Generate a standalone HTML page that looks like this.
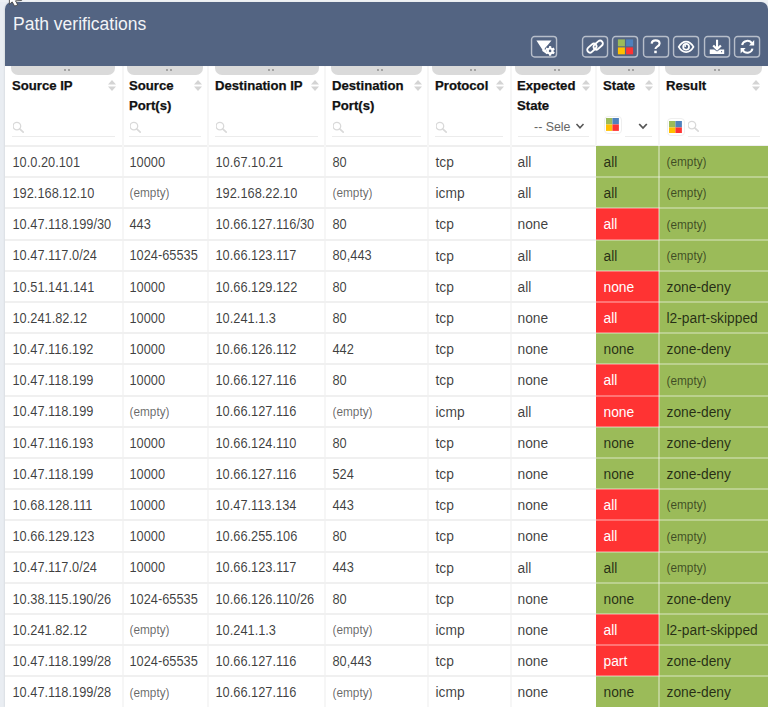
<!DOCTYPE html><html><head><meta charset="utf-8"><style>
html,body{margin:0;padding:0}
body{width:768px;height:707px;overflow:hidden;position:relative;background:#e9edf2;font-family:"Liberation Sans",sans-serif;}
.a{position:absolute}
#topstrip{left:0;top:0;width:768px;height:2px;background:#eef1f4}
#panel{left:5px;top:2px;width:763px;height:64px;background:#536482;border-radius:7px 7px 0 0;box-shadow:-1px 0 1.5px rgba(0,0,0,0.07)}
#title{left:13px;top:13.5px;font-size:17.5px;color:#f2f4f7;white-space:nowrap;line-height:20px}
.btn{top:36px;width:24px;height:20px;border:1.5px solid rgba(255,255,255,0.55);border-radius:4px}
#tbl{left:5px;top:66px;width:763px;height:641px;background:#fff;box-shadow:-1px 0 1.5px rgba(0,0,0,0.06)}
.handle{top:66px;height:9.3px;background:#dadada;border-radius:0 0 7px 7px}
.dots{top:69.2px;width:6px;height:2px}
.ht{font-weight:bold;font-size:13.15px;color:#111;-webkit-text-stroke:0.25px #111;white-space:nowrap;line-height:20px}
.sort{width:8px;height:11px}
.uline{top:136px;height:1px;background:#ececec}
.vline{top:66px;width:2px;height:641px;background:#f6f6f6}
.hline{left:5px;width:763px;height:2px;background:#f0f0f0}
.cell{font-size:12.8px;color:rgba(0,0,0,0.76);white-space:nowrap;line-height:16px;transform:scaleY(1.1);transform-origin:0 12.4px}
.emp{font-size:11.8px;color:rgba(0,0,0,0.6);margin-top:-0.7px}
.g{background:#9bbb59}
.r{background:#ff3333}
</style></head><body>
<div class="a" id="topstrip"></div>
<div class="a" id="tbl"></div>
<div class="a" style="left:5px;top:144.9px;width:763px;height:2px;background:#efefef"></div>
<div class="a g" style="left:596px;top:146.00px;width:63px;height:31.20px"></div>
<div class="a g" style="left:659px;top:146.00px;width:109px;height:31.20px"></div>
<div class="a g" style="left:596px;top:177.20px;width:63px;height:31.20px"></div>
<div class="a g" style="left:659px;top:177.20px;width:109px;height:31.20px"></div>
<div class="a r" style="left:596px;top:208.40px;width:63px;height:31.20px"></div>
<div class="a g" style="left:659px;top:208.40px;width:109px;height:31.20px"></div>
<div class="a g" style="left:596px;top:239.60px;width:63px;height:31.20px"></div>
<div class="a g" style="left:659px;top:239.60px;width:109px;height:31.20px"></div>
<div class="a r" style="left:596px;top:270.80px;width:63px;height:31.20px"></div>
<div class="a g" style="left:659px;top:270.80px;width:109px;height:31.20px"></div>
<div class="a r" style="left:596px;top:302.00px;width:63px;height:31.20px"></div>
<div class="a g" style="left:659px;top:302.00px;width:109px;height:31.20px"></div>
<div class="a g" style="left:596px;top:333.20px;width:63px;height:31.20px"></div>
<div class="a g" style="left:659px;top:333.20px;width:109px;height:31.20px"></div>
<div class="a r" style="left:596px;top:364.40px;width:63px;height:31.20px"></div>
<div class="a g" style="left:659px;top:364.40px;width:109px;height:31.20px"></div>
<div class="a r" style="left:596px;top:395.60px;width:63px;height:31.20px"></div>
<div class="a g" style="left:659px;top:395.60px;width:109px;height:31.20px"></div>
<div class="a g" style="left:596px;top:426.80px;width:63px;height:31.20px"></div>
<div class="a g" style="left:659px;top:426.80px;width:109px;height:31.20px"></div>
<div class="a g" style="left:596px;top:458.00px;width:63px;height:31.20px"></div>
<div class="a g" style="left:659px;top:458.00px;width:109px;height:31.20px"></div>
<div class="a r" style="left:596px;top:489.20px;width:63px;height:31.20px"></div>
<div class="a g" style="left:659px;top:489.20px;width:109px;height:31.20px"></div>
<div class="a r" style="left:596px;top:520.40px;width:63px;height:31.20px"></div>
<div class="a g" style="left:659px;top:520.40px;width:109px;height:31.20px"></div>
<div class="a g" style="left:596px;top:551.60px;width:63px;height:31.20px"></div>
<div class="a g" style="left:659px;top:551.60px;width:109px;height:31.20px"></div>
<div class="a g" style="left:596px;top:582.80px;width:63px;height:31.20px"></div>
<div class="a g" style="left:659px;top:582.80px;width:109px;height:31.20px"></div>
<div class="a r" style="left:596px;top:614.00px;width:63px;height:31.20px"></div>
<div class="a g" style="left:659px;top:614.00px;width:109px;height:31.20px"></div>
<div class="a r" style="left:596px;top:645.20px;width:63px;height:31.20px"></div>
<div class="a g" style="left:659px;top:645.20px;width:109px;height:31.20px"></div>
<div class="a g" style="left:596px;top:676.40px;width:63px;height:31.20px"></div>
<div class="a g" style="left:659px;top:676.40px;width:109px;height:31.20px"></div>
<div class="a vline" style="left:121.80px"></div>
<div class="a vline" style="left:207.10px"></div>
<div class="a vline" style="left:324.20px"></div>
<div class="a vline" style="left:427.00px"></div>
<div class="a vline" style="left:509.50px"></div>
<div class="a vline" style="left:594.70px;height:80px"></div>
<div class="a vline" style="left:657.90px;height:80px"></div>
<div class="a" style="left:657.9px;top:146px;width:2px;height:561px;background:rgba(255,255,255,0.35)"></div>
<div class="a hline" style="top:176.20px;width:591px"></div>
<div class="a hline" style="top:176.20px;left:596px;width:172px;background:rgba(255,255,255,0.32)"></div>
<div class="a hline" style="top:207.40px;width:591px"></div>
<div class="a hline" style="top:207.40px;left:596px;width:172px;background:rgba(255,255,255,0.32)"></div>
<div class="a hline" style="top:238.60px;width:591px"></div>
<div class="a hline" style="top:238.60px;left:596px;width:172px;background:rgba(255,255,255,0.32)"></div>
<div class="a hline" style="top:269.80px;width:591px"></div>
<div class="a hline" style="top:269.80px;left:596px;width:172px;background:rgba(255,255,255,0.32)"></div>
<div class="a hline" style="top:301.00px;width:591px"></div>
<div class="a hline" style="top:301.00px;left:596px;width:172px;background:rgba(255,255,255,0.32)"></div>
<div class="a hline" style="top:332.20px;width:591px"></div>
<div class="a hline" style="top:332.20px;left:596px;width:172px;background:rgba(255,255,255,0.32)"></div>
<div class="a hline" style="top:363.40px;width:591px"></div>
<div class="a hline" style="top:363.40px;left:596px;width:172px;background:rgba(255,255,255,0.32)"></div>
<div class="a hline" style="top:394.60px;width:591px"></div>
<div class="a hline" style="top:394.60px;left:596px;width:172px;background:rgba(255,255,255,0.32)"></div>
<div class="a hline" style="top:425.80px;width:591px"></div>
<div class="a hline" style="top:425.80px;left:596px;width:172px;background:rgba(255,255,255,0.32)"></div>
<div class="a hline" style="top:457.00px;width:591px"></div>
<div class="a hline" style="top:457.00px;left:596px;width:172px;background:rgba(255,255,255,0.32)"></div>
<div class="a hline" style="top:488.20px;width:591px"></div>
<div class="a hline" style="top:488.20px;left:596px;width:172px;background:rgba(255,255,255,0.32)"></div>
<div class="a hline" style="top:519.40px;width:591px"></div>
<div class="a hline" style="top:519.40px;left:596px;width:172px;background:rgba(255,255,255,0.32)"></div>
<div class="a hline" style="top:550.60px;width:591px"></div>
<div class="a hline" style="top:550.60px;left:596px;width:172px;background:rgba(255,255,255,0.32)"></div>
<div class="a hline" style="top:581.80px;width:591px"></div>
<div class="a hline" style="top:581.80px;left:596px;width:172px;background:rgba(255,255,255,0.32)"></div>
<div class="a hline" style="top:613.00px;width:591px"></div>
<div class="a hline" style="top:613.00px;left:596px;width:172px;background:rgba(255,255,255,0.32)"></div>
<div class="a hline" style="top:644.20px;width:591px"></div>
<div class="a hline" style="top:644.20px;left:596px;width:172px;background:rgba(255,255,255,0.32)"></div>
<div class="a hline" style="top:675.40px;width:591px"></div>
<div class="a hline" style="top:675.40px;left:596px;width:172px;background:rgba(255,255,255,0.32)"></div>
<div class="a hline" style="top:706.60px;width:591px"></div>
<div class="a hline" style="top:706.60px;left:596px;width:172px;background:rgba(255,255,255,0.32)"></div>
<div class="a cell" style="left:12.5px;top:154.80px;">10.0.20.101</div>
<div class="a cell" style="left:129.5px;top:154.80px;">10000</div>
<div class="a cell" style="left:215.5px;top:154.80px;">10.67.10.21</div>
<div class="a cell" style="left:332.5px;top:154.80px;">80</div>
<div class="a cell" style="left:435.5px;top:154.80px;font-size:13.8px;margin-top:0.2px;transform:none;">tcp</div>
<div class="a cell" style="left:517.5px;top:154.80px;font-size:13.8px;margin-top:0.2px;transform:none;">all</div>
<div class="a cell" style="left:603.5px;top:154.80px;font-size:13.8px;margin-top:0.2px;transform:none;">all</div>
<div class="a cell emp" style="left:666.5px;top:154.80px;">(empty)</div>
<div class="a cell" style="left:12.5px;top:186.00px;">192.168.12.10</div>
<div class="a cell emp" style="left:129.5px;top:186.00px;">(empty)</div>
<div class="a cell" style="left:215.5px;top:186.00px;">192.168.22.10</div>
<div class="a cell emp" style="left:332.5px;top:186.00px;">(empty)</div>
<div class="a cell" style="left:435.5px;top:186.00px;font-size:13.8px;margin-top:0.2px;transform:none;">icmp</div>
<div class="a cell" style="left:517.5px;top:186.00px;font-size:13.8px;margin-top:0.2px;transform:none;">all</div>
<div class="a cell" style="left:603.5px;top:186.00px;font-size:13.8px;margin-top:0.2px;transform:none;">all</div>
<div class="a cell emp" style="left:666.5px;top:186.00px;">(empty)</div>
<div class="a cell" style="left:12.5px;top:217.20px;">10.47.118.199/30</div>
<div class="a cell" style="left:129.5px;top:217.20px;">443</div>
<div class="a cell" style="left:215.5px;top:217.20px;">10.66.127.116/30</div>
<div class="a cell" style="left:332.5px;top:217.20px;">80</div>
<div class="a cell" style="left:435.5px;top:217.20px;font-size:13.8px;margin-top:0.2px;transform:none;">tcp</div>
<div class="a cell" style="left:517.5px;top:217.20px;font-size:13.8px;margin-top:0.2px;transform:none;">none</div>
<div class="a cell" style="left:603.5px;top:217.20px;color:#fff;font-size:13.8px;margin-top:0.2px;transform:none;">all</div>
<div class="a cell emp" style="left:666.5px;top:217.20px;">(empty)</div>
<div class="a cell" style="left:12.5px;top:248.40px;">10.47.117.0/24</div>
<div class="a cell" style="left:129.5px;top:248.40px;">1024-65535</div>
<div class="a cell" style="left:215.5px;top:248.40px;">10.66.123.117</div>
<div class="a cell" style="left:332.5px;top:248.40px;">80,443</div>
<div class="a cell" style="left:435.5px;top:248.40px;font-size:13.8px;margin-top:0.2px;transform:none;">tcp</div>
<div class="a cell" style="left:517.5px;top:248.40px;font-size:13.8px;margin-top:0.2px;transform:none;">all</div>
<div class="a cell" style="left:603.5px;top:248.40px;font-size:13.8px;margin-top:0.2px;transform:none;">all</div>
<div class="a cell emp" style="left:666.5px;top:248.40px;">(empty)</div>
<div class="a cell" style="left:12.5px;top:279.60px;">10.51.141.141</div>
<div class="a cell" style="left:129.5px;top:279.60px;">10000</div>
<div class="a cell" style="left:215.5px;top:279.60px;">10.66.129.122</div>
<div class="a cell" style="left:332.5px;top:279.60px;">80</div>
<div class="a cell" style="left:435.5px;top:279.60px;font-size:13.8px;margin-top:0.2px;transform:none;">tcp</div>
<div class="a cell" style="left:517.5px;top:279.60px;font-size:13.8px;margin-top:0.2px;transform:none;">all</div>
<div class="a cell" style="left:603.5px;top:279.60px;color:#fff;font-size:13.8px;margin-top:0.2px;transform:none;">none</div>
<div class="a cell" style="left:666.5px;top:279.60px;font-size:13.8px;margin-top:0.2px;transform:none;">zone-deny</div>
<div class="a cell" style="left:12.5px;top:310.80px;">10.241.82.12</div>
<div class="a cell" style="left:129.5px;top:310.80px;">10000</div>
<div class="a cell" style="left:215.5px;top:310.80px;">10.241.1.3</div>
<div class="a cell" style="left:332.5px;top:310.80px;">80</div>
<div class="a cell" style="left:435.5px;top:310.80px;font-size:13.8px;margin-top:0.2px;transform:none;">tcp</div>
<div class="a cell" style="left:517.5px;top:310.80px;font-size:13.8px;margin-top:0.2px;transform:none;">none</div>
<div class="a cell" style="left:603.5px;top:310.80px;color:#fff;font-size:13.8px;margin-top:0.2px;transform:none;">all</div>
<div class="a cell" style="left:666.5px;top:310.80px;font-size:13.8px;margin-top:0.2px;transform:none;">l2-part-skipped</div>
<div class="a cell" style="left:12.5px;top:342.00px;">10.47.116.192</div>
<div class="a cell" style="left:129.5px;top:342.00px;">10000</div>
<div class="a cell" style="left:215.5px;top:342.00px;">10.66.126.112</div>
<div class="a cell" style="left:332.5px;top:342.00px;">442</div>
<div class="a cell" style="left:435.5px;top:342.00px;font-size:13.8px;margin-top:0.2px;transform:none;">tcp</div>
<div class="a cell" style="left:517.5px;top:342.00px;font-size:13.8px;margin-top:0.2px;transform:none;">none</div>
<div class="a cell" style="left:603.5px;top:342.00px;font-size:13.8px;margin-top:0.2px;transform:none;">none</div>
<div class="a cell" style="left:666.5px;top:342.00px;font-size:13.8px;margin-top:0.2px;transform:none;">zone-deny</div>
<div class="a cell" style="left:12.5px;top:373.20px;">10.47.118.199</div>
<div class="a cell" style="left:129.5px;top:373.20px;">10000</div>
<div class="a cell" style="left:215.5px;top:373.20px;">10.66.127.116</div>
<div class="a cell" style="left:332.5px;top:373.20px;">80</div>
<div class="a cell" style="left:435.5px;top:373.20px;font-size:13.8px;margin-top:0.2px;transform:none;">tcp</div>
<div class="a cell" style="left:517.5px;top:373.20px;font-size:13.8px;margin-top:0.2px;transform:none;">none</div>
<div class="a cell" style="left:603.5px;top:373.20px;color:#fff;font-size:13.8px;margin-top:0.2px;transform:none;">all</div>
<div class="a cell emp" style="left:666.5px;top:373.20px;">(empty)</div>
<div class="a cell" style="left:12.5px;top:404.40px;">10.47.118.199</div>
<div class="a cell emp" style="left:129.5px;top:404.40px;">(empty)</div>
<div class="a cell" style="left:215.5px;top:404.40px;">10.66.127.116</div>
<div class="a cell emp" style="left:332.5px;top:404.40px;">(empty)</div>
<div class="a cell" style="left:435.5px;top:404.40px;font-size:13.8px;margin-top:0.2px;transform:none;">icmp</div>
<div class="a cell" style="left:517.5px;top:404.40px;font-size:13.8px;margin-top:0.2px;transform:none;">all</div>
<div class="a cell" style="left:603.5px;top:404.40px;color:#fff;font-size:13.8px;margin-top:0.2px;transform:none;">none</div>
<div class="a cell" style="left:666.5px;top:404.40px;font-size:13.8px;margin-top:0.2px;transform:none;">zone-deny</div>
<div class="a cell" style="left:12.5px;top:435.60px;">10.47.116.193</div>
<div class="a cell" style="left:129.5px;top:435.60px;">10000</div>
<div class="a cell" style="left:215.5px;top:435.60px;">10.66.124.110</div>
<div class="a cell" style="left:332.5px;top:435.60px;">80</div>
<div class="a cell" style="left:435.5px;top:435.60px;font-size:13.8px;margin-top:0.2px;transform:none;">tcp</div>
<div class="a cell" style="left:517.5px;top:435.60px;font-size:13.8px;margin-top:0.2px;transform:none;">none</div>
<div class="a cell" style="left:603.5px;top:435.60px;font-size:13.8px;margin-top:0.2px;transform:none;">none</div>
<div class="a cell" style="left:666.5px;top:435.60px;font-size:13.8px;margin-top:0.2px;transform:none;">zone-deny</div>
<div class="a cell" style="left:12.5px;top:466.80px;">10.47.118.199</div>
<div class="a cell" style="left:129.5px;top:466.80px;">10000</div>
<div class="a cell" style="left:215.5px;top:466.80px;">10.66.127.116</div>
<div class="a cell" style="left:332.5px;top:466.80px;">524</div>
<div class="a cell" style="left:435.5px;top:466.80px;font-size:13.8px;margin-top:0.2px;transform:none;">tcp</div>
<div class="a cell" style="left:517.5px;top:466.80px;font-size:13.8px;margin-top:0.2px;transform:none;">none</div>
<div class="a cell" style="left:603.5px;top:466.80px;font-size:13.8px;margin-top:0.2px;transform:none;">none</div>
<div class="a cell" style="left:666.5px;top:466.80px;font-size:13.8px;margin-top:0.2px;transform:none;">zone-deny</div>
<div class="a cell" style="left:12.5px;top:498.00px;">10.68.128.111</div>
<div class="a cell" style="left:129.5px;top:498.00px;">10000</div>
<div class="a cell" style="left:215.5px;top:498.00px;">10.47.113.134</div>
<div class="a cell" style="left:332.5px;top:498.00px;">443</div>
<div class="a cell" style="left:435.5px;top:498.00px;font-size:13.8px;margin-top:0.2px;transform:none;">tcp</div>
<div class="a cell" style="left:517.5px;top:498.00px;font-size:13.8px;margin-top:0.2px;transform:none;">none</div>
<div class="a cell" style="left:603.5px;top:498.00px;color:#fff;font-size:13.8px;margin-top:0.2px;transform:none;">all</div>
<div class="a cell emp" style="left:666.5px;top:498.00px;">(empty)</div>
<div class="a cell" style="left:12.5px;top:529.20px;">10.66.129.123</div>
<div class="a cell" style="left:129.5px;top:529.20px;">10000</div>
<div class="a cell" style="left:215.5px;top:529.20px;">10.66.255.106</div>
<div class="a cell" style="left:332.5px;top:529.20px;">80</div>
<div class="a cell" style="left:435.5px;top:529.20px;font-size:13.8px;margin-top:0.2px;transform:none;">tcp</div>
<div class="a cell" style="left:517.5px;top:529.20px;font-size:13.8px;margin-top:0.2px;transform:none;">none</div>
<div class="a cell" style="left:603.5px;top:529.20px;color:#fff;font-size:13.8px;margin-top:0.2px;transform:none;">all</div>
<div class="a cell emp" style="left:666.5px;top:529.20px;">(empty)</div>
<div class="a cell" style="left:12.5px;top:560.40px;">10.47.117.0/24</div>
<div class="a cell" style="left:129.5px;top:560.40px;">10000</div>
<div class="a cell" style="left:215.5px;top:560.40px;">10.66.123.117</div>
<div class="a cell" style="left:332.5px;top:560.40px;">443</div>
<div class="a cell" style="left:435.5px;top:560.40px;font-size:13.8px;margin-top:0.2px;transform:none;">tcp</div>
<div class="a cell" style="left:517.5px;top:560.40px;font-size:13.8px;margin-top:0.2px;transform:none;">all</div>
<div class="a cell" style="left:603.5px;top:560.40px;font-size:13.8px;margin-top:0.2px;transform:none;">all</div>
<div class="a cell emp" style="left:666.5px;top:560.40px;">(empty)</div>
<div class="a cell" style="left:12.5px;top:591.60px;">10.38.115.190/26</div>
<div class="a cell" style="left:129.5px;top:591.60px;">1024-65535</div>
<div class="a cell" style="left:215.5px;top:591.60px;">10.66.126.110/26</div>
<div class="a cell" style="left:332.5px;top:591.60px;">80</div>
<div class="a cell" style="left:435.5px;top:591.60px;font-size:13.8px;margin-top:0.2px;transform:none;">tcp</div>
<div class="a cell" style="left:517.5px;top:591.60px;font-size:13.8px;margin-top:0.2px;transform:none;">none</div>
<div class="a cell" style="left:603.5px;top:591.60px;font-size:13.8px;margin-top:0.2px;transform:none;">none</div>
<div class="a cell" style="left:666.5px;top:591.60px;font-size:13.8px;margin-top:0.2px;transform:none;">zone-deny</div>
<div class="a cell" style="left:12.5px;top:622.80px;">10.241.82.12</div>
<div class="a cell emp" style="left:129.5px;top:622.80px;">(empty)</div>
<div class="a cell" style="left:215.5px;top:622.80px;">10.241.1.3</div>
<div class="a cell emp" style="left:332.5px;top:622.80px;">(empty)</div>
<div class="a cell" style="left:435.5px;top:622.80px;font-size:13.8px;margin-top:0.2px;transform:none;">icmp</div>
<div class="a cell" style="left:517.5px;top:622.80px;font-size:13.8px;margin-top:0.2px;transform:none;">none</div>
<div class="a cell" style="left:603.5px;top:622.80px;color:#fff;font-size:13.8px;margin-top:0.2px;transform:none;">all</div>
<div class="a cell" style="left:666.5px;top:622.80px;font-size:13.8px;margin-top:0.2px;transform:none;">l2-part-skipped</div>
<div class="a cell" style="left:12.5px;top:654.00px;">10.47.118.199/28</div>
<div class="a cell" style="left:129.5px;top:654.00px;">1024-65535</div>
<div class="a cell" style="left:215.5px;top:654.00px;">10.66.127.116</div>
<div class="a cell" style="left:332.5px;top:654.00px;">80,443</div>
<div class="a cell" style="left:435.5px;top:654.00px;font-size:13.8px;margin-top:0.2px;transform:none;">tcp</div>
<div class="a cell" style="left:517.5px;top:654.00px;font-size:13.8px;margin-top:0.2px;transform:none;">none</div>
<div class="a cell" style="left:603.5px;top:654.00px;color:#fff;font-size:13.8px;margin-top:0.2px;transform:none;">part</div>
<div class="a cell" style="left:666.5px;top:654.00px;font-size:13.8px;margin-top:0.2px;transform:none;">zone-deny</div>
<div class="a cell" style="left:12.5px;top:685.20px;">10.47.118.199/28</div>
<div class="a cell emp" style="left:129.5px;top:685.20px;">(empty)</div>
<div class="a cell" style="left:215.5px;top:685.20px;">10.66.127.116</div>
<div class="a cell emp" style="left:332.5px;top:685.20px;">(empty)</div>
<div class="a cell" style="left:435.5px;top:685.20px;font-size:13.8px;margin-top:0.2px;transform:none;">icmp</div>
<div class="a cell" style="left:517.5px;top:685.20px;font-size:13.8px;margin-top:0.2px;transform:none;">none</div>
<div class="a cell" style="left:603.5px;top:685.20px;font-size:13.8px;margin-top:0.2px;transform:none;">none</div>
<div class="a cell" style="left:666.5px;top:685.20px;font-size:13.8px;margin-top:0.2px;transform:none;">zone-deny</div>
<div class="a" id="panel"></div>
<div class="a" id="title">Path verifications</div>
<svg class="a" style="left:530px;top:35px;width:28px;height:24px" viewBox="0 0 28 24"><rect x="1.55" y="1.55" width="25" height="20.4" rx="3" fill="none" stroke="rgba(255,255,255,0.58)" stroke-width="1.4"/><path d="M6.4 5.5H21.5L16.6 11.6V19L12.3 16V14.4Z" fill="#fff"/><path d="M15.08 14.55A5.2 5.2 0 0 1 25.12 17.25" fill="none" stroke="#536482" stroke-width="1.4"/><g transform="translate(20.1 15.9)" fill="#fff"><circle r="3.5"/><rect x="-1.1" y="-4.8" width="2.2" height="2.4" transform="rotate(0)"/><rect x="-1.1" y="-4.8" width="2.2" height="2.4" transform="rotate(60)"/><rect x="-1.1" y="-4.8" width="2.2" height="2.4" transform="rotate(120)"/><rect x="-1.1" y="-4.8" width="2.2" height="2.4" transform="rotate(180)"/><rect x="-1.1" y="-4.8" width="2.2" height="2.4" transform="rotate(240)"/><rect x="-1.1" y="-4.8" width="2.2" height="2.4" transform="rotate(300)"/></g><circle cx="20.1" cy="15.9" r="1.3" fill="#536482"/></svg>
<svg class="a" style="left:581px;top:35px;width:28px;height:24px" viewBox="0 0 28 24"><rect x="1.55" y="1.55" width="25" height="20.4" rx="3" fill="none" stroke="rgba(255,255,255,0.58)" stroke-width="1.4"/><g fill="none" stroke="#fff" stroke-width="1.9"><rect x="-5.3" y="-2.8" width="10.6" height="5.6" rx="2.8" transform="translate(10.92 13.1) rotate(-41.5)"/><rect x="-5.3" y="-2.8" width="10.6" height="5.6" rx="2.8" transform="translate(17.18 10.1) rotate(-41.5)"/></g></svg>
<svg class="a" style="left:611.3px;top:35px;width:28px;height:24px" viewBox="0 0 28 24"><rect x="1.55" y="1.55" width="25" height="20.4" rx="3" fill="none" stroke="rgba(255,255,255,0.58)" stroke-width="1.4"/><rect x="6.9" y="4.4" width="7" height="6.9" fill="#9bbb59"/><rect x="15.1" y="4.4" width="7" height="6.9" fill="#4f81bd"/><rect x="6.9" y="12.4" width="7" height="6.9" fill="#ffc000"/><rect x="15.1" y="12.4" width="7" height="6.9" fill="#ff3333"/></svg>
<svg class="a" style="left:642px;top:35px;width:28px;height:24px" viewBox="0 0 28 24"><rect x="1.55" y="1.55" width="25" height="20.4" rx="3" fill="none" stroke="rgba(255,255,255,0.58)" stroke-width="1.4"/><path d="M9.6 8.6C9.9 6.5 11.6 5.4 13.6 5.4C16 5.4 17.6 6.8 17.6 8.6C17.6 10.4 16.1 11.1 14.9 11.8C13.9 12.4 13.5 13 13.5 14.1" fill="none" stroke="#fff" stroke-width="2.1"/><rect x="12.25" y="15.7" width="2.5" height="2.5" fill="#fff"/></svg>
<svg class="a" style="left:672px;top:35px;width:28px;height:24px" viewBox="0 0 28 24"><rect x="1.55" y="1.55" width="25" height="20.4" rx="3" fill="none" stroke="rgba(255,255,255,0.58)" stroke-width="1.4"/><g transform="translate(-0.3 0)"><path d="M7 11.85C9.5 7.6 11.5 6.6 14.4 6.6C17.3 6.6 19.3 7.6 21.8 11.85C19.3 16.1 17.3 17.1 14.4 17.1C11.5 17.1 9.5 16.1 7 11.85Z" fill="none" stroke="#fff" stroke-width="1.8" stroke-linejoin="round"/><circle cx="14.4" cy="11.8" r="2.95" fill="none" stroke="#fff" stroke-width="1.7"/><circle cx="13.5" cy="10.9" r="1" fill="#fff"/></g></svg>
<svg class="a" style="left:703px;top:35px;width:28px;height:24px" viewBox="0 0 28 24"><rect x="1.55" y="1.55" width="25" height="20.4" rx="3" fill="none" stroke="rgba(255,255,255,0.58)" stroke-width="1.4"/><path d="M14.05 4.7V14.2" stroke="#fff" stroke-width="2.1"/><path d="M10.2 10.4L14.05 14.3L17.9 10.4" fill="none" stroke="#fff" stroke-width="2.2"/><path d="M6.75 14.5H11.2L14.05 16.6L16.9 14.5H21.2V19.1H6.75Z" fill="#fff"/><circle cx="18.6" cy="16.7" r="0.6" fill="#536482"/></svg>
<svg class="a" style="left:733.3px;top:35px;width:28px;height:24px" viewBox="0 0 28 24"><rect x="1.55" y="1.55" width="25" height="20.4" rx="3" fill="none" stroke="rgba(255,255,255,0.58)" stroke-width="1.4"/><path d="M9.1 10A5.3 5.3 0 0 1 18.9 8.6" fill="none" stroke="#fff" stroke-width="2"/><path d="M16 10.6H21.2V5.1Z" fill="#fff"/><path d="M19.5 13.6A5.3 5.3 0 0 1 9.7 15" fill="none" stroke="#fff" stroke-width="2"/><path d="M12.6 13.1H7.6V18.6Z" fill="#fff"/></svg>
<div class="a handle" style="left:11px;width:104px"></div>
<svg class="a dots" style="left:63.5px" viewBox="0 0 6 2"><circle cx="1" cy="1" r="0.9" fill="#888"/><circle cx="5" cy="1" r="0.9" fill="#888"/></svg>
<div class="a ht" style="left:12px;top:76px">Source IP</div>
<svg class="a sort" style="left:107.5px;top:80px" viewBox="0 0 8 11"><path d="M4 0L8 4.5H0Z" fill="#d4d4d4"/><path d="M4 11L8 6.5H0Z" fill="#d4d4d4"/></svg>
<div class="a uline" style="left:12px;width:103px"></div>
<svg class="a" style="left:13px;top:121px;width:13px;height:13px" viewBox="0 0 13 13"><circle cx="3.9" cy="5.1" r="3.8" fill="none" stroke="#d9d9d9" stroke-width="1.3"/><path d="M6.7 7.9L10.2 11.2" stroke="#d9d9d9" stroke-width="1.7" stroke-linecap="round"/></svg>
<div class="a handle" style="left:126.8px;width:76.60000000000001px"></div>
<svg class="a dots" style="left:165.6px" viewBox="0 0 6 2"><circle cx="1" cy="1" r="0.9" fill="#888"/><circle cx="5" cy="1" r="0.9" fill="#888"/></svg>
<div class="a ht" style="left:129px;top:76px">Source</div>
<div class="a ht" style="left:129px;top:96px">Port(s)</div>
<svg class="a sort" style="left:193.5px;top:80px" viewBox="0 0 8 11"><path d="M4 0L8 4.5H0Z" fill="#d4d4d4"/><path d="M4 11L8 6.5H0Z" fill="#d4d4d4"/></svg>
<div class="a uline" style="left:129px;width:72px"></div>
<svg class="a" style="left:130px;top:121px;width:13px;height:13px" viewBox="0 0 13 13"><circle cx="3.9" cy="5.1" r="3.8" fill="none" stroke="#d9d9d9" stroke-width="1.3"/><path d="M6.7 7.9L10.2 11.2" stroke="#d9d9d9" stroke-width="1.7" stroke-linecap="round"/></svg>
<div class="a handle" style="left:214.6px;width:104.79999999999998px"></div>
<svg class="a dots" style="left:267.5px" viewBox="0 0 6 2"><circle cx="1" cy="1" r="0.9" fill="#888"/><circle cx="5" cy="1" r="0.9" fill="#888"/></svg>
<div class="a ht" style="left:215px;top:76px">Destination IP</div>
<svg class="a sort" style="left:310.5px;top:80px" viewBox="0 0 8 11"><path d="M4 0L8 4.5H0Z" fill="#d4d4d4"/><path d="M4 11L8 6.5H0Z" fill="#d4d4d4"/></svg>
<div class="a uline" style="left:215px;width:103px"></div>
<svg class="a" style="left:216px;top:121px;width:13px;height:13px" viewBox="0 0 13 13"><circle cx="3.9" cy="5.1" r="3.8" fill="none" stroke="#d9d9d9" stroke-width="1.3"/><path d="M6.7 7.9L10.2 11.2" stroke="#d9d9d9" stroke-width="1.7" stroke-linecap="round"/></svg>
<div class="a handle" style="left:331px;width:90.5px"></div>
<svg class="a dots" style="left:376.8px" viewBox="0 0 6 2"><circle cx="1" cy="1" r="0.9" fill="#888"/><circle cx="5" cy="1" r="0.9" fill="#888"/></svg>
<div class="a ht" style="left:332px;top:76px">Destination</div>
<div class="a ht" style="left:332px;top:96px">Port(s)</div>
<svg class="a sort" style="left:413.5px;top:80px" viewBox="0 0 8 11"><path d="M4 0L8 4.5H0Z" fill="#d4d4d4"/><path d="M4 11L8 6.5H0Z" fill="#d4d4d4"/></svg>
<div class="a uline" style="left:332px;width:89px"></div>
<svg class="a" style="left:333px;top:121px;width:13px;height:13px" viewBox="0 0 13 13"><circle cx="3.9" cy="5.1" r="3.8" fill="none" stroke="#d9d9d9" stroke-width="1.3"/><path d="M6.7 7.9L10.2 11.2" stroke="#d9d9d9" stroke-width="1.7" stroke-linecap="round"/></svg>
<div class="a handle" style="left:432.2px;width:73.80000000000001px"></div>
<svg class="a dots" style="left:469.6px" viewBox="0 0 6 2"><circle cx="1" cy="1" r="0.9" fill="#888"/><circle cx="5" cy="1" r="0.9" fill="#888"/></svg>
<div class="a ht" style="left:435px;top:76px">Protocol</div>
<svg class="a sort" style="left:495.5px;top:80px" viewBox="0 0 8 11"><path d="M4 0L8 4.5H0Z" fill="#d4d4d4"/><path d="M4 11L8 6.5H0Z" fill="#d4d4d4"/></svg>
<div class="a uline" style="left:435px;width:68px"></div>
<svg class="a" style="left:436px;top:121px;width:13px;height:13px" viewBox="0 0 13 13"><circle cx="3.9" cy="5.1" r="3.8" fill="none" stroke="#d9d9d9" stroke-width="1.3"/><path d="M6.7 7.9L10.2 11.2" stroke="#d9d9d9" stroke-width="1.7" stroke-linecap="round"/></svg>
<div class="a handle" style="left:515px;width:76.10000000000002px"></div>
<svg class="a dots" style="left:553.5px" viewBox="0 0 6 2"><circle cx="1" cy="1" r="0.9" fill="#888"/><circle cx="5" cy="1" r="0.9" fill="#888"/></svg>
<div class="a ht" style="left:517px;top:76px">Expected</div>
<div class="a ht" style="left:517px;top:96px">State</div>
<svg class="a sort" style="left:581.5px;top:80px" viewBox="0 0 8 11"><path d="M4 0L8 4.5H0Z" fill="#d4d4d4"/><path d="M4 11L8 6.5H0Z" fill="#d4d4d4"/></svg>
<div class="a uline" style="left:518px;width:71px"></div>
<div class="a" style="left:534px;top:119.5px;font-size:12.4px;line-height:14px;color:#666;white-space:nowrap">-- Sele</div>
<svg class="a" style="left:575px;top:122px;width:10px;height:8px" viewBox="0 0 10 8"><path d="M1.5 2L5 5.8L8.5 2" fill="none" stroke="#555" stroke-width="1.5"/></svg>
<div class="a handle" style="left:599.8px;width:55.5px"></div>
<svg class="a dots" style="left:628.0px" viewBox="0 0 6 2"><circle cx="1" cy="1" r="0.9" fill="#888"/><circle cx="5" cy="1" r="0.9" fill="#888"/></svg>
<div class="a ht" style="left:603px;top:76px">State</div>
<svg class="a sort" style="left:644.5px;top:80px" viewBox="0 0 8 11"><path d="M4 0L8 4.5H0Z" fill="#d4d4d4"/><path d="M4 11L8 6.5H0Z" fill="#d4d4d4"/></svg>
<div class="a" style="left:603.5px;top:115.5px;width:16.3px;height:16.3px;border:1px solid #efefef;border-radius:4px;background:#fff"></div>
<svg class="a" style="left:606.2px;top:118.4px;width:12.9px;height:12.9px" viewBox="0 0 2 2"><rect x="0" y="0" width="1" height="1" fill="#9bbb59"/><rect x="1" y="0" width="1" height="1" fill="#4f81bd"/><rect x="0" y="1" width="1" height="1" fill="#ffc000"/><rect x="1" y="1" width="1" height="1" fill="#ff3333"/></svg>
<div class="a uline" style="left:624.5px;width:27.5px"></div>
<svg class="a" style="left:637.5px;top:121.5px;width:10px;height:8px" viewBox="0 0 10 8"><path d="M1.2 2L5 6L8.8 2" fill="none" stroke="#555" stroke-width="1.8"/></svg>
<div class="a handle" style="left:664.9px;width:97.0px"></div>
<svg class="a dots" style="left:713.9px" viewBox="0 0 6 2"><circle cx="1" cy="1" r="0.9" fill="#888"/><circle cx="5" cy="1" r="0.9" fill="#888"/></svg>
<div class="a ht" style="left:666px;top:76px">Result</div>
<svg class="a sort" style="left:752.3px;top:80px" viewBox="0 0 8 11"><path d="M4 0L8 4.5H0Z" fill="#d4d4d4"/><path d="M4 11L8 6.5H0Z" fill="#d4d4d4"/></svg>
<div class="a" style="left:667.4px;top:117.8px;width:16px;height:16px;border:1px solid #efefef;border-radius:4px;background:#fff"></div>
<svg class="a" style="left:669.4px;top:120.5px;width:12.9px;height:12.9px" viewBox="0 0 2 2"><rect x="0" y="0" width="1" height="1" fill="#9bbb59"/><rect x="1" y="0" width="1" height="1" fill="#4f81bd"/><rect x="0" y="1" width="1" height="1" fill="#ffc000"/><rect x="1" y="1" width="1" height="1" fill="#ff3333"/></svg>
<div class="a uline" style="left:687.7px;width:72.5px"></div>
<svg class="a" style="left:687.8px;top:120.3px;width:13px;height:13px" viewBox="0 0 13 13"><circle cx="3.9" cy="5.1" r="3.8" fill="none" stroke="#d9d9d9" stroke-width="1.3"/><path d="M6.7 7.9L10.2 11.2" stroke="#d9d9d9" stroke-width="1.7" stroke-linecap="round"/></svg>
<svg class="a" style="left:0;top:0;width:30px;height:10px" viewBox="0 0 30 10"><path d="M9.4 -14V4.3L12.2 1.9L14.6 6.1L17.7 4.9L15.5 0.8L21.6 0.5Z" fill="#fff" stroke="#474747" stroke-width="0.9" stroke-linejoin="round"/></svg>
</body></html>
